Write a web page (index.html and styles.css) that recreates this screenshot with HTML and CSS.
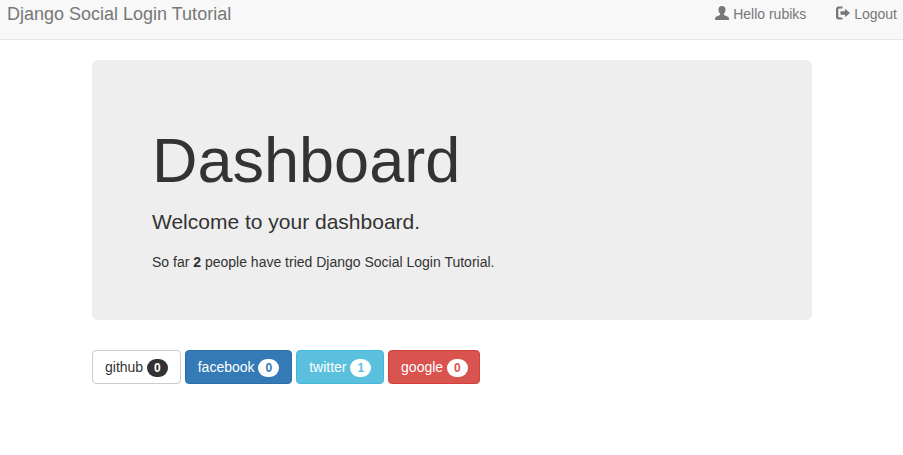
FILE: index.html

```html
<!DOCTYPE html>
<html lang="en">
<head>
  <meta charset="UTF-8" />
  <meta name="viewport" content="width=device-width, initial-scale=1.0"/>
  <title>Django Social Login Tutorial</title>
  <link rel="stylesheet" href="styles.css">
</head>
<body>
  <nav class="navbar">
    <a class="brand" href="#">Django Social Login Tutorial</a>
    <ul class="nav-links">
      <li>
        <a href="#">
          <svg class="icon" viewBox="0 0 14 14" width="14" height="14"><path fill="currentColor" d="M7 0C4.700 0 3.500 1.500 3.500 3.500c0 1.600.6 3.100 1.500 4 .4.500.4 1.100 0 1.500C4.100 9.800 1 10.200.3 11.500 0 12.100 0 13 0 14h14c0-1 0-1.900-.3-2.500C13 10.200 9.900 9.800 9 9c-.4-.4-.4-1 0-1.500.9-.9 1.500-2.400 1.500-4C10.500 1.500 9.300 0 7 0z"/></svg>
          Hello rubiks
        </a>
      </li>
      <li>
        <a href="#">
          <svg class="icon" viewBox="0 0 14 14" width="14" height="14"><path fill="currentColor" d="M2.500 0.500H6.500V2.500H3.500C2.700 2.500 2.300 3 2.300 3.700V10.300C2.300 11 2.700 11.500 3.500 11.500H6.500V13.500H2.500C1 13.500 0 12.500 0 11V3C0 1.500 1 .5 2.500 .5zM9 2.800L14 7L9 11.200V8.700H4.500V5.300H9z"/></svg>
          Logout
        </a>
      </li>
    </ul>
  </nav>

  <main class="container">
    <section class="jumbotron">
      <h1>Dashboard</h1>
      <p class="lead">Welcome to your dashboard.</p>
      <p class="count">So far <b>2</b> people have tried Django Social Login Tutorial.</p>
    </section>

    <div class="providers">
      <a class="btn btn-default" href="#">github <span class="badge">0</span></a>
      <a class="btn btn-primary" href="#">facebook <span class="badge">0</span></a>
      <a class="btn btn-info" href="#">twitter <span class="badge">1</span></a>
      <a class="btn btn-danger" href="#">google <span class="badge">0</span></a>
    </div>
  </main>
</body>
</html>
```

FILE: styles.css

```css
* {
  box-sizing: border-box;
}
body {
  margin: 0;
  font-family: "Liberation Sans", Arial, sans-serif;
  font-size: 14px;
  line-height: 20px;
  color: #333;
  background: #fff;
}
a {
  text-decoration: none;
}
.navbar {
  display: flex;
  justify-content: space-between;
  height: 40px;
  padding: 0 6px 0 7px;
  background: #f8f8f8;
  border-bottom: 1px solid #e7e7e7;
}
.brand {
  margin-top: 4px;
  font-size: 18px;
  color: #777;
}
.nav-links {
  display: flex;
  gap: 30px;
  margin: 4px 0 0;
  padding: 0;
  list-style: none;
}
.nav-links a {
  color: #777;
}
.icon {
  vertical-align: -1px;
}
.container {
  width: 720px;
  margin: 20px 0 0 92px;
}
.jumbotron {
  height: 260px;
  padding: 66px 60px 0;
  background: #eee;
  border-radius: 6px;
}
h1 {
  margin: 0 0 12px;
  font-size: 63px;
  line-height: 69px;
  font-weight: normal;
}
.lead {
  margin: 0 0 15px;
  font-size: 21px;
  line-height: 30px;
}
.count {
  margin: 0;
}
.providers {
  display: flex;
  gap: 4px;
  margin-top: 30px;
}
.btn {
  display: block;
  height: 34px;
  padding: 6px 12px;
  border: 1px solid transparent;
  border-radius: 4px;
  color: #fff;
}
.btn-default {
  color: #333;
  background: #fff;
  border-color: #ccc;
}
.btn-primary {
  background: #337ab7;
  border-color: #2e6da4;
}
.btn-info {
  background: #5bc0de;
  border-color: #46b8da;
}
.btn-danger {
  padding-right: 11.4px;
  background: #d9534f;
  border-color: #d43f3a;
}
.badge {
  display: inline-block;
  min-width: 10px;
  padding: 3px 7px;
  font-size: 12px;
  font-weight: bold;
  line-height: 1;
  text-align: center;
  vertical-align: middle;
  border-radius: 10px;
  color: #fff;
  background: #333;
}
.btn-primary .badge {
  color: #337ab7;
  background: #fff;
}
.btn-info .badge {
  color: #5bc0de;
  background: #fff;
}
.btn-danger .badge {
  color: #d9534f;
  background: #fff;
}
```
